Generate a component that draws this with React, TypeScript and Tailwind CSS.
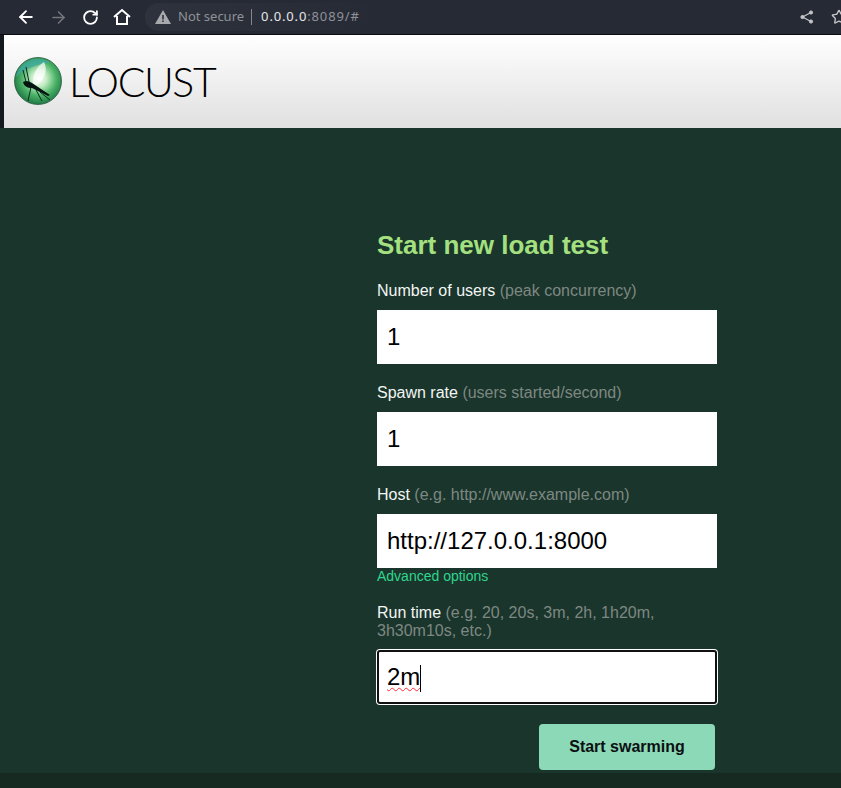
import { ArrowLeft, ArrowRight, RotateCw, Star } from 'lucide-react';

const sans = "font-['Liberation_Sans',Arial,sans-serif]";

function Browser() {
  return (
    <div className="h-[35px] bg-[#262a35] border-b border-[#0b0c10] flex items-center font-['Noto_Sans',sans-serif] overflow-hidden">
      <ArrowLeft size={20} strokeWidth={2.2} className="ml-[16px] text-white" />
      <ArrowRight size={19} strokeWidth={2} className="ml-[13px] text-[#74767c]" />
      <RotateCw size={17} strokeWidth={2.6} className="ml-[14px] text-white" />
      <svg width="20" height="20" viewBox="0 0 20 20" className="ml-[13px] text-white" fill="none" stroke="currentColor" strokeWidth="2">
        <path d="M2 10 10 3l8 7M5 9v8h10V9" />
      </svg>
      <div className="ml-[13px] w-[240px] h-[28px] rounded-l-full bg-gradient-to-r from-[#2e323d] to-[#262a35] flex items-center pl-[10px] text-[13px]">
        <svg width="16" height="14" viewBox="0 0 16 14" className="text-[#a7a9ad]">
          <path d="M8 0 16 14H0Z" fill="currentColor" />
          <path d="M7.2 5h1.6v4.5H7.2zM7.2 10.5h1.6V12H7.2z" fill="#2e323d" />
        </svg>
        <span className="ml-[7px] text-[#8f9197] whitespace-nowrap">Not secure</span>
        <span className="ml-[7px] w-px h-[16px] bg-[#85878d] shrink-0" />
        <span className="ml-[9px] text-[#e6e7e9] tracking-[0.85px]">0.0.0.0<span className="text-[#8f9197]">:8089/#</span></span>
      </div>
      <div className="ml-auto flex items-center">
        <svg width="14" height="14" viewBox="0 0 14 14" className="text-[#c6c7ca]" fill="currentColor" stroke="currentColor">
          <circle cx="11" cy="2.5" r="1.6" />
          <circle cx="2.5" cy="7" r="1.6" />
          <circle cx="11" cy="11.5" r="1.6" />
          <path d="M11 2.5 2.5 7l8.5 4.5" fill="none" strokeWidth="1.2" />
        </svg>
        <Star size={16} className="ml-[17px] mr-[-6px] text-[#c6c7ca]" />
      </div>
    </div>
  );
}

function LogoMark() {
  return (
    <svg width="48" height="48" viewBox="0 0 48 48" className="-mt-[1px]">
      <defs>
        <radialGradient id="orb" cx="0.52" cy="0.45" r="0.58">
          <stop offset="0" stopColor="#ffffff" />
          <stop offset="0.28" stopColor="#c4ecc4" />
          <stop offset="0.62" stopColor="#4cb468" />
          <stop offset="1" stopColor="#186f3e" />
        </radialGradient>
      </defs>
      <circle cx="24" cy="24" r="23.5" fill="url(#orb)" stroke="#2a5a42" strokeWidth="0.8" />
      <path d="M2 20A22 22 0 0 1 24 2a22 22 0 0 1 12 4C26 6 12 11 2 20Z" fill="#3fa89c" opacity="0.8" />
      <path d="M19 27C18 18 23 9 30 5c4 7 1 18-7 23Z" fill="#ffffff" opacity="0.7" />
      <path d="M9 25c3-2 6-1 9 1l18 12-2 1-16-8c-5 0-8-2-9-6Z" fill="#071510" />
      <path d="M9 13l3 12M12 10l3 15M17 30l-3 14M22 33l6 11M26 35l10 8" stroke="#0b2a20" strokeWidth="1" fill="none" />
    </svg>
  );
}

function Field({ label, hint, value }: { label: string; hint: string; value: string }) {
  return (
    <div>
      <label className="block text-[16px] leading-[18px] text-[#f2f6f4]">
        {label} <span className="text-[#7e8883]">{hint}</span>
      </label>
      <input
        readOnly
        value={value}
        className="mt-[10px] block w-[340px] h-[54px] bg-white px-[10px] text-[24px] text-black outline-none"
      />
    </div>
  );
}

export default function App() {
  return (
    <div className={`h-[788px] w-[841px] overflow-hidden bg-[#1a352b] flex flex-col ${sans}`}>
      <Browser />
      <header className="h-[93px] bg-gradient-to-b from-white to-[#e0e0e0] border-l-[4px] border-[#14181f] flex items-center pl-[10px] shrink-0">
        <LogoMark />
        <span className="ml-[7px] font-['Lato',sans-serif] font-light text-[41px] leading-none text-black tracking-[-1.4px]">LOCUST</span>
      </header>
      <main className="flex-1 pl-[377px] pt-[101px]">
        <h2 className="text-[26px] leading-[32px] font-bold text-[#a4e07f]">Start new load test</h2>
        <div className="mt-[21px]">
          <Field label="Number of users" hint="(peak concurrency)" value="1" />
        </div>
        <div className="mt-[20px]">
          <Field label="Spawn rate" hint="(users started/second)" value="1" />
        </div>
        <div className="mt-[20px]">
          <Field label="Host" hint="(e.g. http://www.example.com)" value="http://127.0.0.1:8000" />
        </div>
        <a className="block text-[14px] leading-[16px] text-[#2fd68f]">Advanced options</a>
        <div className="mt-[20px] w-[340px] text-[16px] leading-[18px] text-[#f2f6f4]">
          Run time <span className="text-[#7e8883]">(e.g. 20, 20s, 3m, 2h, 1h20m, 3h30m10s, etc.)</span>
        </div>
        <div className="relative mt-[10px] w-[340px] h-[54px] bg-white pl-[10px] text-[24px] leading-[54px] text-black rounded-[3px] outline-2 outline-[#111] -outline-offset-2 ring-1 ring-white">
          <span className="underline decoration-wavy decoration-red-500 decoration-1 underline-offset-2 [text-decoration-skip-ink:none]">2m</span>
          <span className="inline-block align-middle h-[27px] w-px bg-black" />
        </div>
        <div className="mt-[20px] w-[338px] flex justify-end">
          <button className="w-[176px] h-[46px] rounded-[4px] bg-[#8bd9b6] text-[16px] font-bold text-[#0b0f12]">Start swarming</button>
        </div>
      </main>
      <div className="h-[15px] bg-[#172a22] shrink-0" />
    </div>
  );
}
